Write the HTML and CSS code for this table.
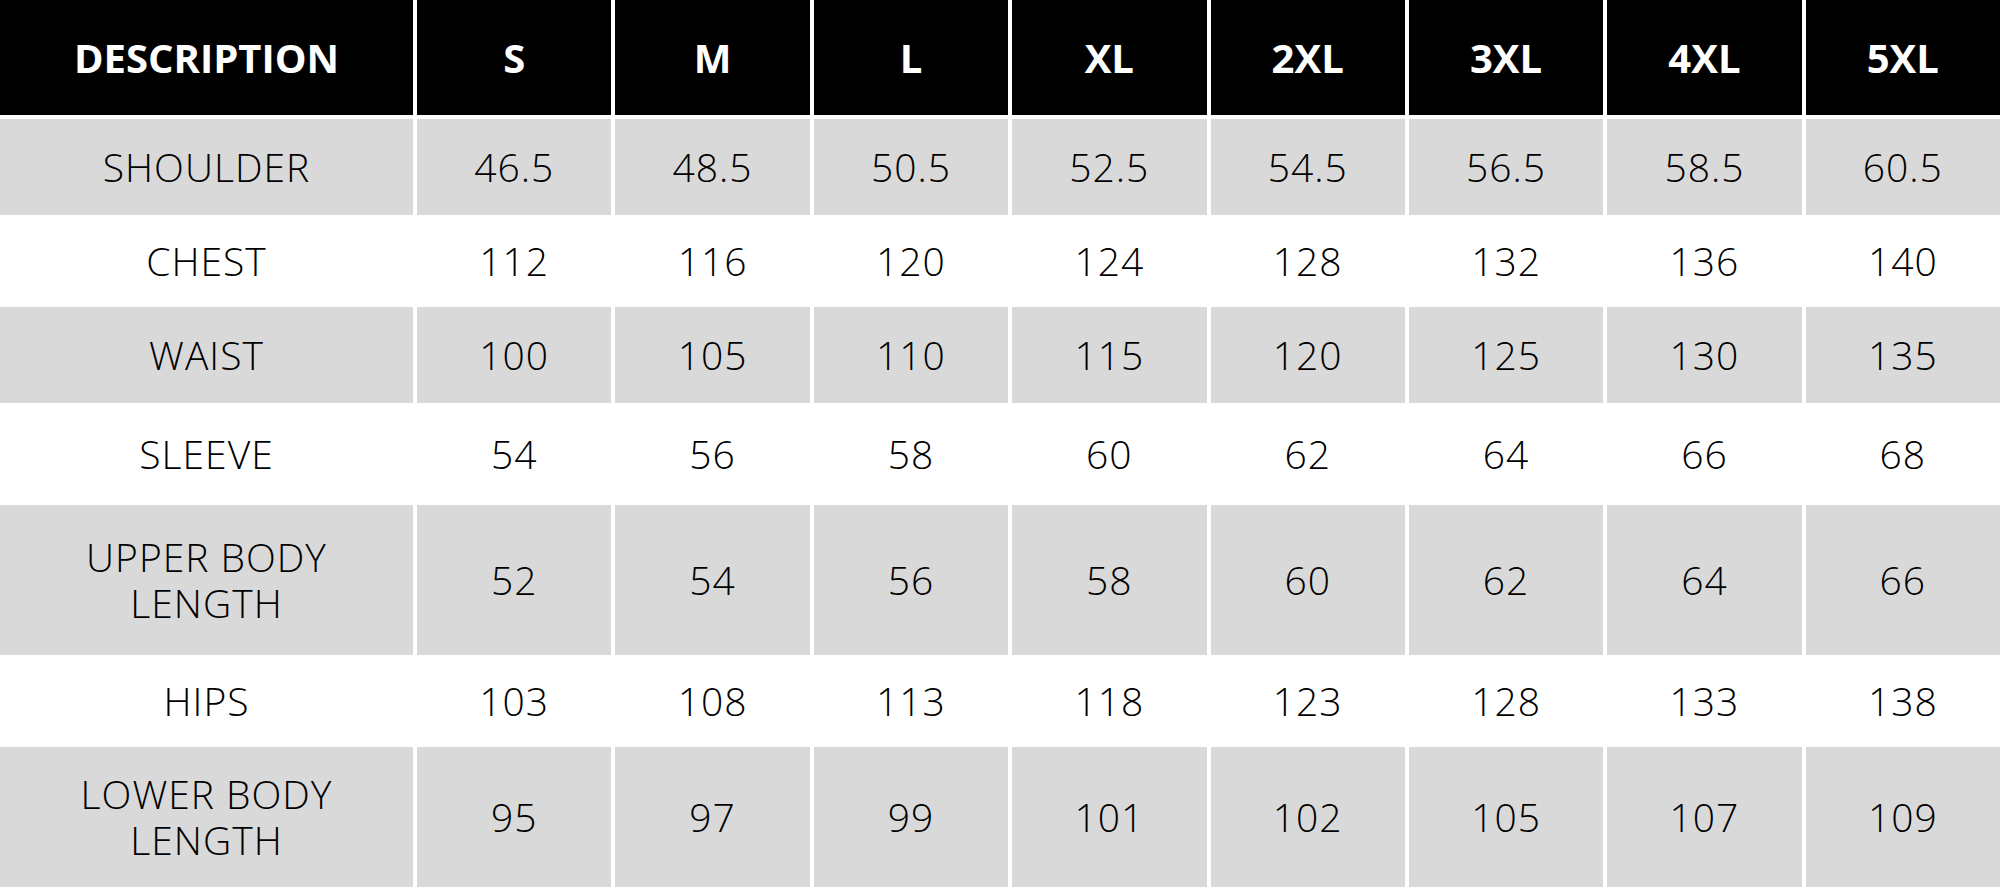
FILE: index.html
```
<!DOCTYPE html>
<html lang="en">
<head>
<meta charset="utf-8">
<title>Size chart</title>
<link rel="stylesheet" href="styles.css">
</head>
<body>
<div class="chart">
  <div class="cell head">DESCRIPTION</div>
  <div class="cell head">S</div>
  <div class="cell head">M</div>
  <div class="cell head">L</div>
  <div class="cell head">XL</div>
  <div class="cell head">2XL</div>
  <div class="cell head">3XL</div>
  <div class="cell head">4XL</div>
  <div class="cell head">5XL</div>

  <div class="cell grey">SHOULDER</div>
  <div class="cell grey">46.5</div>
  <div class="cell grey">48.5</div>
  <div class="cell grey">50.5</div>
  <div class="cell grey">52.5</div>
  <div class="cell grey">54.5</div>
  <div class="cell grey">56.5</div>
  <div class="cell grey">58.5</div>
  <div class="cell grey">60.5</div>

  <div class="cell">CHEST</div>
  <div class="cell">112</div>
  <div class="cell">116</div>
  <div class="cell">120</div>
  <div class="cell">124</div>
  <div class="cell">128</div>
  <div class="cell">132</div>
  <div class="cell">136</div>
  <div class="cell">140</div>

  <div class="cell grey">WAIST</div>
  <div class="cell grey">100</div>
  <div class="cell grey">105</div>
  <div class="cell grey">110</div>
  <div class="cell grey">115</div>
  <div class="cell grey">120</div>
  <div class="cell grey">125</div>
  <div class="cell grey">130</div>
  <div class="cell grey">135</div>

  <div class="cell">SLEEVE</div>
  <div class="cell">54</div>
  <div class="cell">56</div>
  <div class="cell">58</div>
  <div class="cell">60</div>
  <div class="cell">62</div>
  <div class="cell">64</div>
  <div class="cell">66</div>
  <div class="cell">68</div>

  <div class="cell grey"><span class="two"><span>UPPER BODY</span><span>LENGTH</span></span></div>
  <div class="cell grey">52</div>
  <div class="cell grey">54</div>
  <div class="cell grey">56</div>
  <div class="cell grey">58</div>
  <div class="cell grey">60</div>
  <div class="cell grey">62</div>
  <div class="cell grey">64</div>
  <div class="cell grey">66</div>

  <div class="cell">HIPS</div>
  <div class="cell">103</div>
  <div class="cell">108</div>
  <div class="cell">113</div>
  <div class="cell">118</div>
  <div class="cell">123</div>
  <div class="cell">128</div>
  <div class="cell">133</div>
  <div class="cell">138</div>

  <div class="cell grey"><span class="two"><span>LOWER BODY</span><span>LENGTH</span></span></div>
  <div class="cell grey">95</div>
  <div class="cell grey">97</div>
  <div class="cell grey">99</div>
  <div class="cell grey">101</div>
  <div class="cell grey">102</div>
  <div class="cell grey">105</div>
  <div class="cell grey">107</div>
  <div class="cell grey">109</div>
</div>
</body>
</html>
```

FILE: styles.css
```
html, body {
  margin: 0;
  padding: 0;
  background: #ffffff;
}

.chart {
  width: 2000px;
  display: grid;
  grid-template-columns: 413px repeat(8, 1fr);
  grid-template-rows: 115px 96px 84px 96px 94px 150px 84px 140px;
  column-gap: 4px;
  row-gap: 4px;
  font-family: "Open Sans", "Noto Sans", sans-serif;
}

.cell {
  display: flex;
  align-items: center;
  justify-content: center;
  text-align: center;
  background: #ffffff;
  color: #000000;
  font-size: 39px;
  font-weight: 300;
  letter-spacing: 1px;
  line-height: 46px;
}

.cell.grey {
  background: #d9d9d9;
}

.two {
  display: flex;
  flex-direction: column;
  align-items: center;
}

.two span {
  line-height: 46px;
}

.cell.head {
  background: #000000;
  color: #ffffff;
  font-size: 40px;
  font-weight: 700;
  letter-spacing: 0;
}
```
